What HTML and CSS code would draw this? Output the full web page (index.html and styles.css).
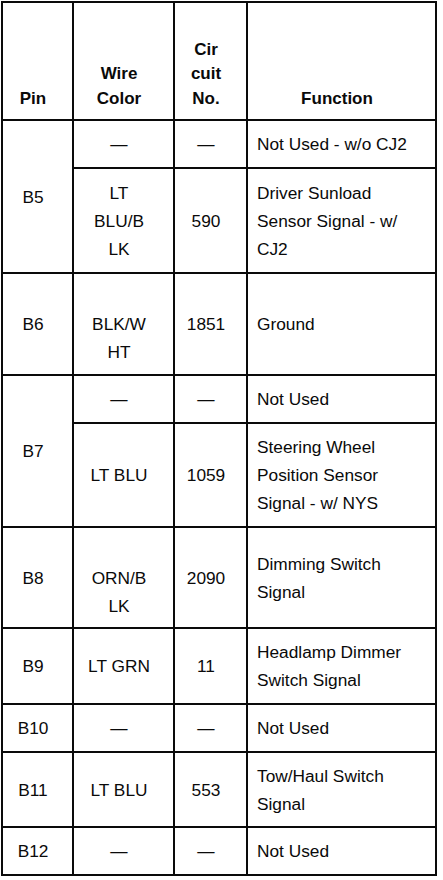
FILE: index.html
```html
<!DOCTYPE html>
<html>
<head>
<meta charset="utf-8">
<link rel="stylesheet" href="styles.css">
</head>
<body>
<table class="pins">
  <colgroup>
    <col class="c-pin">
    <col class="c-wire">
    <col class="c-circ">
    <col class="c-func">
  </colgroup>
  <thead>
    <tr class="h-head">
      <th>Pin</th>
      <th>Wire<br>Color</th>
      <th>Cir<br>cuit<br>No.</th>
      <th>Function</th>
    </tr>
  </thead>
  <tbody>
    <tr class="h48">
      <td class="pin" rowspan="2">B5</td>
      <td>—</td>
      <td>—</td>
      <td class="func">Not Used - w/o CJ2</td>
    </tr>
    <tr class="h105">
      <td>LT<br>BLU/B<br>LK</td>
      <td>590</td>
      <td class="func">Driver Sunload Sensor Signal - w/ CJ2</td>
    </tr>
    <tr class="h102">
      <td class="pin">B6</td>
      <td><div class="drop">BLK/W<br>HT</div></td>
      <td>1851</td>
      <td class="func">Ground</td>
    </tr>
    <tr class="h48">
      <td class="pin" rowspan="2">B7</td>
      <td>—</td>
      <td>—</td>
      <td class="func">Not Used</td>
    </tr>
    <tr class="h104">
      <td>LT BLU</td>
      <td>1059</td>
      <td class="func">Steering Wheel Position Sensor Signal - w/ NYS</td>
    </tr>
    <tr class="h101">
      <td class="pin">B8</td>
      <td><div class="drop">ORN/B<br>LK</div></td>
      <td>2090</td>
      <td class="func">Dimming Switch Signal</td>
    </tr>
    <tr class="h76">
      <td class="pin">B9</td>
      <td>LT GRN</td>
      <td>11</td>
      <td class="func">Headlamp Dimmer Switch Signal</td>
    </tr>
    <tr class="h48">
      <td class="pin">B10</td>
      <td>—</td>
      <td>—</td>
      <td class="func">Not Used</td>
    </tr>
    <tr class="h75">
      <td class="pin">B11</td>
      <td>LT BLU</td>
      <td>553</td>
      <td class="func">Tow/Haul Switch Signal</td>
    </tr>
    <tr class="h48">
      <td class="pin">B12</td>
      <td>—</td>
      <td>—</td>
      <td class="func">Not Used</td>
    </tr>
  </tbody>
</table>
</body>
</html>
```

FILE: styles.css
```css
html, body {
  margin: 0;
  padding: 0;
  background: #ffffff;
}

body {
  padding: 1px 0 0 1px;
  font-family: "Liberation Sans", Arial, sans-serif;
  color: #0a0a0a;
}

.pins {
  border-collapse: collapse;
  table-layout: fixed;
  width: 436px;
  font-size: 17.3px;
}

.c-pin { width: 71px; }
.c-wire { width: 101px; }
.c-circ { width: 73px; }
.c-func { width: 189px; }

.pins th,
.pins td {
  border: 2px solid #0a0a0a;
  padding: 0 18px 0 9px;
  text-align: center;
  vertical-align: middle;
  line-height: 28px;
  white-space: nowrap;
}

.pins th {
  font-size: 17px;
  font-weight: bold;
  line-height: 24.5px;
  vertical-align: bottom;
  padding-bottom: 8px;
}

.pins td.func {
  text-align: left;
  white-space: normal;
}

.drop {
  padding-top: 28px;
}

.h-head { height: 118px; }
.h48 { height: 48px; }
.h75 { height: 75px; }
.h76 { height: 76px; }
.h101 { height: 101px; }
.h102 { height: 102px; }
.h104 { height: 104px; }
.h105 { height: 105px; }
```
